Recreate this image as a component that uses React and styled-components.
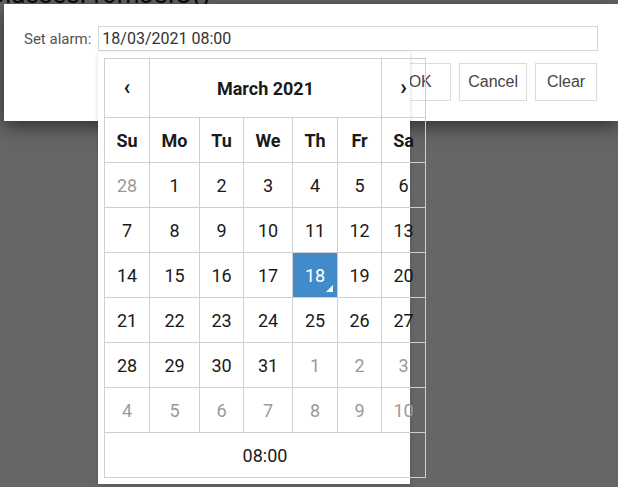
import React from "react";
import styled, { createGlobalStyle } from "styled-components";

const GlobalStyle = createGlobalStyle`
  html, body { margin: 0; padding: 0; background: #fff; overflow: hidden; }
  body { font-family: Roboto, "Liberation Sans", sans-serif; }
`;

const Page = styled.div`
  position: relative;
  width: 618px;
  height: 487px;
  overflow: hidden;
`;

const Title = styled.h1`
  margin: -21px 0 0 -12px;
  font-family: Roboto, sans-serif;
  font-size: 26px;
  font-weight: 400;
  color: #222;
  white-space: nowrap;
`;

const Backdrop = styled.div`
  position: absolute;
  inset: 0;
  background: rgba(0, 0, 0, 0.6);
`;

const Dialog = styled.div`
  position: absolute;
  left: 4px;
  top: 4px;
  width: 614px;
  height: 117px;
  box-sizing: border-box;
  padding: 22px 20px 0 20px;
  background: #fff;
  box-shadow: 0 5px 18px rgba(0, 0, 0, 0.55);
  display: flex;
  flex-direction: column;
`;

const FieldRow = styled.div`
  display: flex;
  align-items: center;
  gap: 7px;
`;

const Label = styled.label`
  font-family: Roboto, sans-serif;
  font-size: 15px;
  color: #555;
`;

const Input = styled.div`
  flex: 1;
  height: 25px;
  box-sizing: border-box;
  border: 1px solid #d6d6d6;
  padding: 0 3px;
  display: flex;
  align-items: center;
  font-family: Roboto, sans-serif;
  font-size: 16px;
  color: #333;
`;

const ButtonRow = styled.div`
  display: flex;
  justify-content: flex-end;
  gap: 8px;
  margin-top: 12px;
  padding-right: 1px;
`;

const Button = styled.button`
  min-width: 62px;
  height: 38px;
  box-sizing: border-box;
  padding: 0 8px;
  background: #fff;
  border: 1px solid #dcdcdc;
  font-family: "Liberation Sans", Arial, sans-serif;
  font-size: 16px;
  color: #444;
`;

const Popup = styled.div`
  position: absolute;
  left: 98px;
  top: 52px;
  width: 312px;
  box-sizing: border-box;
  padding: 6px;
  background: #fff;
  box-shadow: 0 1px 4px rgba(0, 0, 0, 0.18);
`;

const Grid = styled.div`
  display: grid;
  grid-template-columns: 45px 50px 44px 49px 45px 44px 44px;
  width: 322px;
  box-sizing: border-box;
  border-top: 1px solid #cfcfcf;
  border-left: 1px solid #cfcfcf;
`;

const Cell = styled.div`
  position: relative;
  box-sizing: border-box;
  height: ${(p) => (p.$tall ? 59 : 45)}px;
  border-right: 1px solid #cfcfcf;
  border-bottom: 1px solid #cfcfcf;
  display: flex;
  align-items: center;
  justify-content: center;
  font-family: Roboto, sans-serif;
  font-size: ${(p) => (p.$arrow ? 22 : 18)}px;
  font-weight: ${(p) => (p.$bold ? 700 : 400)};
  color: ${(p) => (p.$selected ? "#fff" : p.$muted ? "#9a9a9a" : "#1a1a1a")};
  background: ${(p) => (p.$selected ? "#428bca" : "transparent")};
  grid-column: ${(p) => p.$span || "auto"};
  padding-bottom: ${(p) => (p.$arrow ? 3 : 0)}px;
`;

const Corner = styled.span`
  position: absolute;
  right: 4px;
  bottom: 5px;
  width: 0;
  height: 0;
  border-left: 7px solid transparent;
  border-bottom: 7px solid #fff;
`;

const dayNames = ["Su", "Mo", "Tu", "We", "Th", "Fr", "Sa"];

const buildDays = () => {
  const days = [{ d: 28, m: true }];
  for (let i = 1; i <= 31; i++) days.push({ d: i, m: false });
  for (let i = 1; i <= 10; i++) days.push({ d: i, m: true });
  return days;
};

export default function App() {
  const days = buildDays();
  return (
    <>
      <GlobalStyle />
      <Page>
        <Title>ClassesFromJsIO()</Title>
        <Backdrop />
        <Dialog>
          <FieldRow>
            <Label>Set alarm:</Label>
            <Input>18/03/2021 08:00</Input>
          </FieldRow>
          <ButtonRow>
            <Button>OK</Button>
            <Button>Cancel</Button>
            <Button>Clear</Button>
          </ButtonRow>
        </Dialog>
        <Popup>
          <Grid>
            <Cell $tall $arrow $bold>‹</Cell>
            <Cell $tall $bold $span="span 5">March 2021</Cell>
            <Cell $tall $arrow $bold>›</Cell>
            {dayNames.map((n) => (
              <Cell key={n} $bold>{n}</Cell>
            ))}
            {days.map((x, i) => {
              const sel = !x.m && x.d === 18;
              return (
                <Cell key={i} $muted={x.m} $selected={sel}>
                  {x.d}
                  {sel && <Corner />}
                </Cell>
              );
            })}
            <Cell $span="span 7">08:00</Cell>
          </Grid>
        </Popup>
      </Page>
    </>
  );
}
